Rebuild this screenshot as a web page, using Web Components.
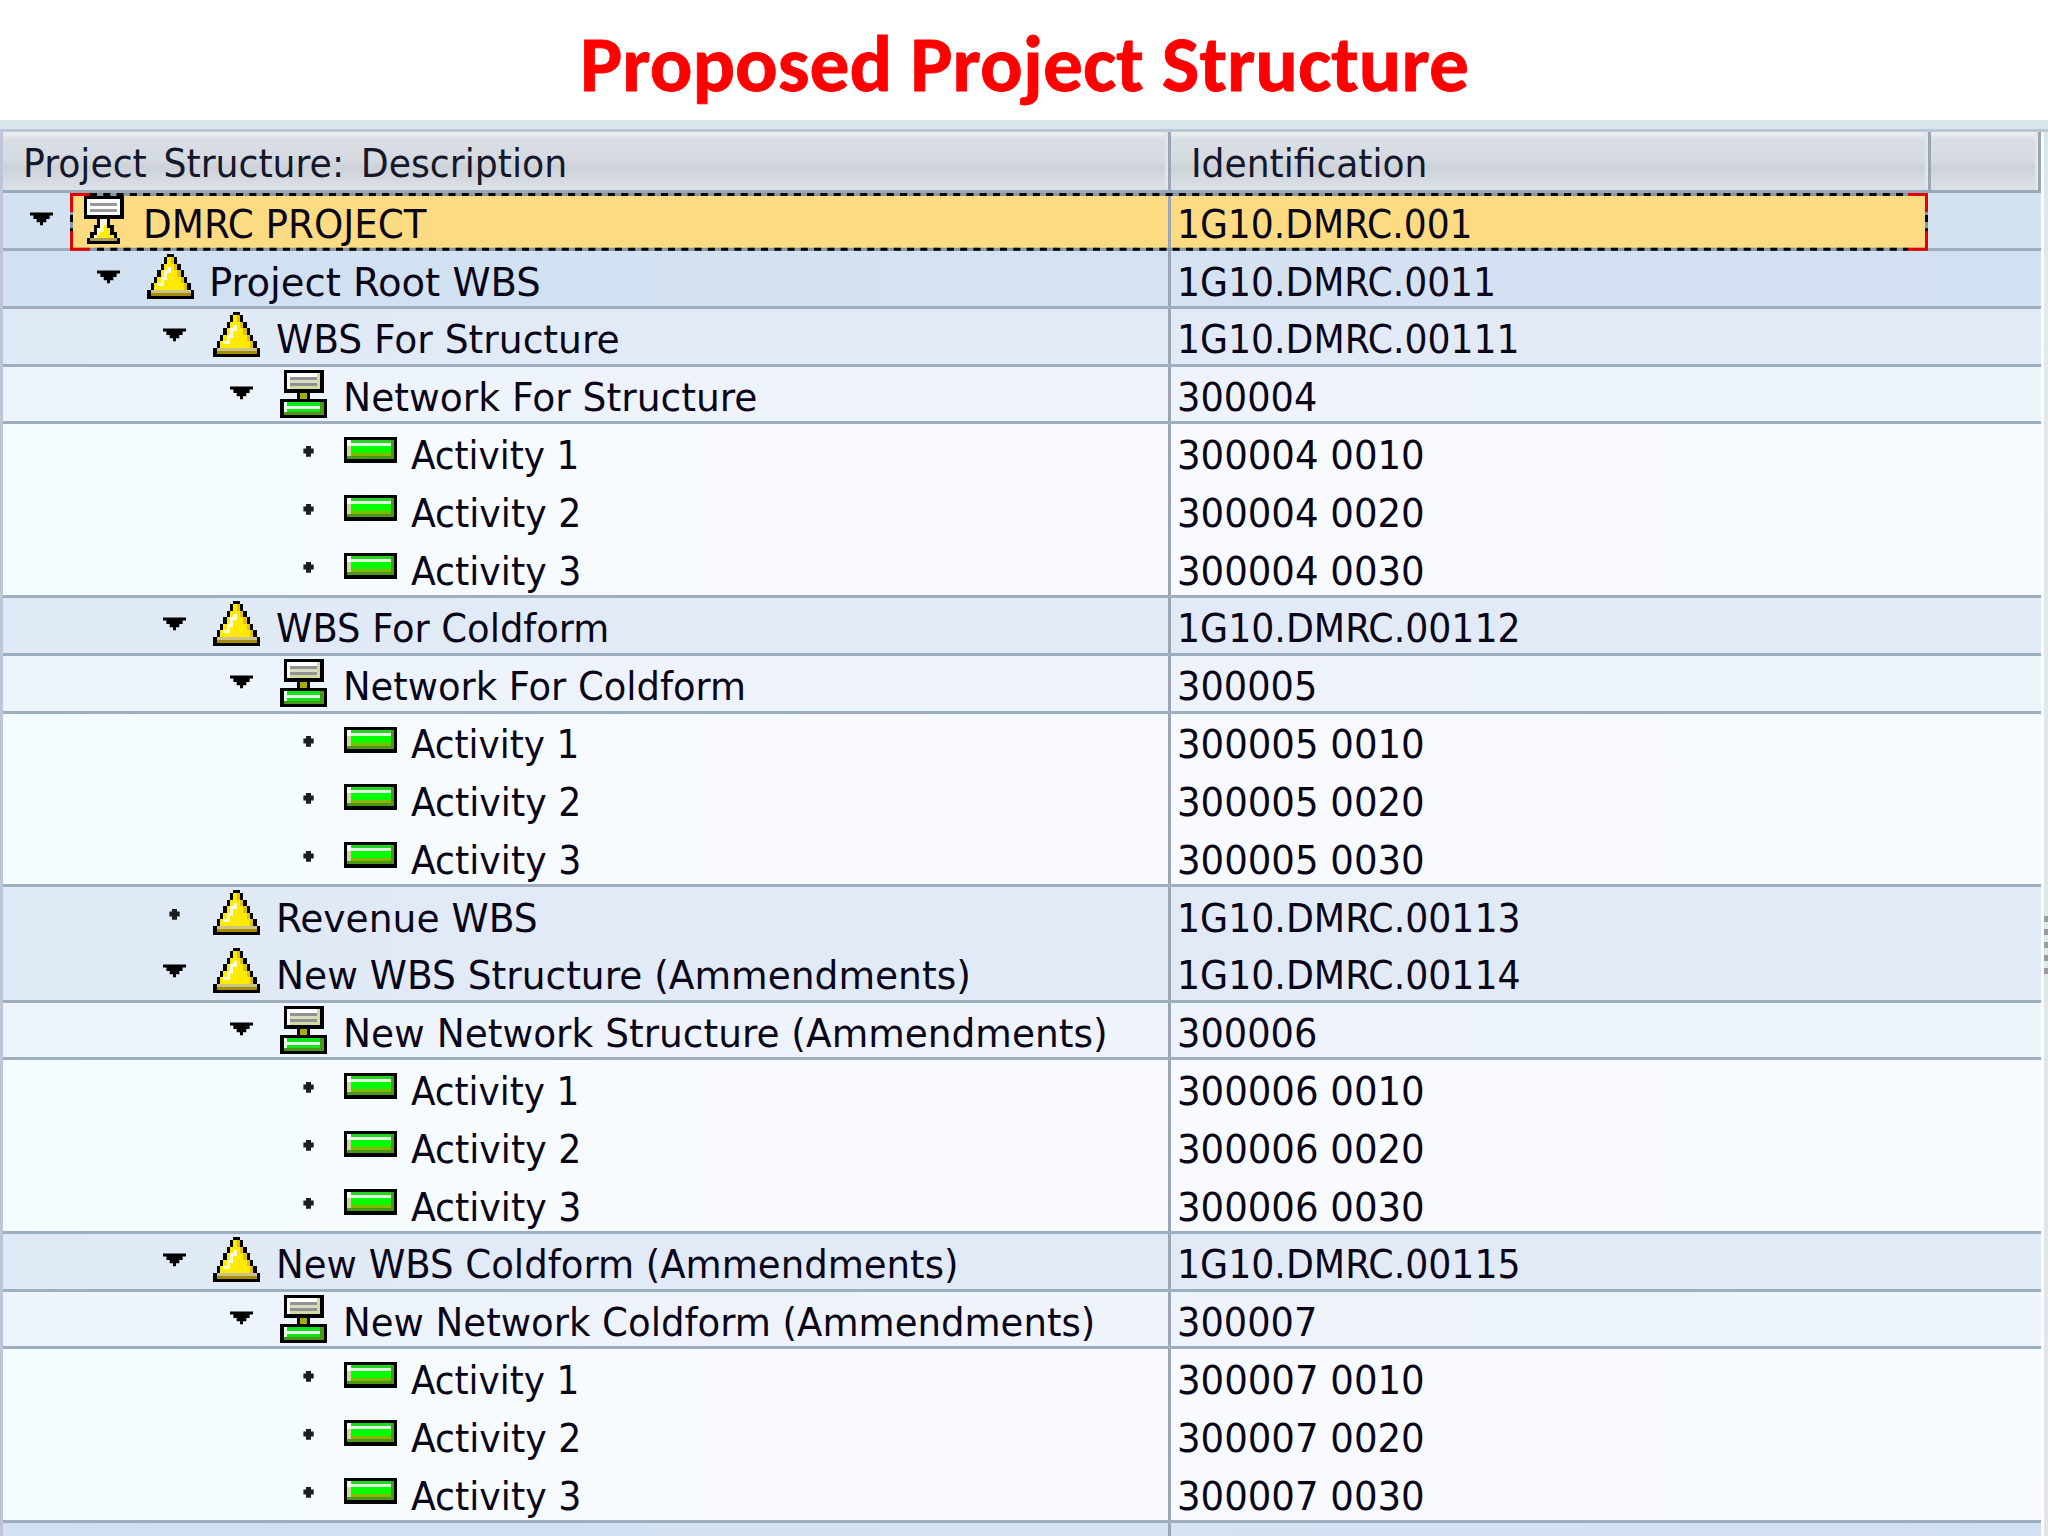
<!DOCTYPE html>
<html lang="en">
<head>
<meta charset="utf-8">
<title>Proposed Project Structure</title>
<style>
  html, body {
    margin: 0;
    height: 1536px;
    overflow: hidden;
    background: white;
  }
</style>
</head>
<body>

<project-slide>
  <fit-text slot="title" width="889">Proposed Project Structure</fit-text>
  <tree-table>
    <fit-text slot="description" width="544">Project Structure: Description</fit-text>
    <fit-text slot="identification" width="236">Identification</fit-text>

    <tree-row level="1" kind="project" code="1G10.DMRC.001" text-width="284" code-width="296" line selected>DMRC PROJECT</tree-row>
    <tree-row level="2" kind="wbs" code="1G10.DMRC.0011" text-width="332" code-width="319" line>Project Root WBS</tree-row>
    <tree-row level="3" kind="wbs" code="1G10.DMRC.00111" text-width="344" code-width="343" line>WBS For Structure</tree-row>
    <tree-row level="4" kind="network" code="300004" text-width="414" code-width="140" line>Network For Structure</tree-row>
    <tree-row level="5" kind="activity" code="300004 0010" text-width="168" code-width="248" leaf>Activity 1</tree-row>
    <tree-row level="5" kind="activity" code="300004 0020" text-width="170" code-width="248" leaf>Activity 2</tree-row>
    <tree-row level="5" kind="activity" code="300004 0030" text-width="170" code-width="248" leaf line>Activity 3</tree-row>
    <tree-row level="3" kind="wbs" code="1G10.DMRC.00112" text-width="333" code-width="344" line>WBS For Coldform</tree-row>
    <tree-row level="4" kind="network" code="300005" text-width="403" code-width="140" line>Network For Coldform</tree-row>
    <tree-row level="5" kind="activity" code="300005 0010" text-width="168" code-width="248" leaf>Activity 1</tree-row>
    <tree-row level="5" kind="activity" code="300005 0020" text-width="170" code-width="248" leaf>Activity 2</tree-row>
    <tree-row level="5" kind="activity" code="300005 0030" text-width="170" code-width="248" leaf line>Activity 3</tree-row>
    <tree-row level="3" kind="wbs" code="1G10.DMRC.00113" text-width="262" code-width="344" leaf>Revenue WBS</tree-row>
    <tree-row level="3" kind="wbs" code="1G10.DMRC.00114" text-width="695" code-width="344" line>New WBS Structure (Ammendments)</tree-row>
    <tree-row level="4" kind="network" code="300006" text-width="765" code-width="140" line>New Network Structure (Ammendments)</tree-row>
    <tree-row level="5" kind="activity" code="300006 0010" text-width="168" code-width="248" leaf>Activity 1</tree-row>
    <tree-row level="5" kind="activity" code="300006 0020" text-width="170" code-width="248" leaf>Activity 2</tree-row>
    <tree-row level="5" kind="activity" code="300006 0030" text-width="170" code-width="248" leaf line>Activity 3</tree-row>
    <tree-row level="3" kind="wbs" code="1G10.DMRC.00115" text-width="682" code-width="344" line>New WBS Coldform (Ammendments)</tree-row>
    <tree-row level="4" kind="network" code="300007" text-width="752" code-width="140" line>New Network Coldform (Ammendments)</tree-row>
    <tree-row level="5" kind="activity" code="300007 0010" text-width="168" code-width="248" leaf>Activity 1</tree-row>
    <tree-row level="5" kind="activity" code="300007 0020" text-width="170" code-width="248" leaf>Activity 2</tree-row>
    <tree-row level="5" kind="activity" code="300007 0030" text-width="170" code-width="248" leaf line>Activity 3</tree-row>
    <tree-row level="2"></tree-row>
  </tree-table>
</project-slide>

<script>
// All icons share a 16x18 pixel grid, one row high
const icons = {
  project: `
    <path d="M2 1h12v7H2z"/>
    <path fill="#fff" d="M3 2h10v5H3z"/>
    <path fill="#999" d="M4 3h8v1H4zM4 5h8v1H4z"/>
    <path d="M6 8h4v2h1v2h1v2h1v2H3v-2h1v-2h1v-2h1z"/>
    <path fill="#f8f4d8" d="M7 8h2v2H7z"/>
    <path fill="#ffec00" d="M7 10h2v1h1v2h1v1H5v-1h1v-2h1z"/>
    <path fill="#fffbd0" d="M7 10h1v2H7v1H6v1H5v-1h1v-2h1z"/>
    <path fill="#aaa05a" d="M4 14h8v1H4z"/>`,
  wbs: `
    <path d="M7 1h2v1h1v2h1v2h1v2h1v2h1v2h1v3H1v-3h1v-2h1V8h1V6h1V4h1V2h1z"/>
    <path fill="#ffea00" d="M7 2h2v2h1v2h1v2h1v2h1v2H3v-2h1V8h1V6h1V4h1z"/>
    <path fill="#e0c000" d="M8 2h1v2h1v2h1v2h1v2h1v2h-1v-2h-1V8h-1V6H9V4H8z"/>
    <path fill="#fffce0" d="M7 5h1v2H7v2H6v2H4v-1h1V8h1V6h1z"/>
    <path fill="#ccc487" d="M2 12h12v1H2z"/>
    <path fill="#a58c00" d="M2 13h12v1H2z"/>`,
  network: `
    <path d="M2 1h12v7H2zM6 8h4v2H6zM1 10h14v6H1z"/>
    <path fill="#fff" d="M3 2h10v5H3z"/>
    <path fill="#d4daa2" d="M12 2h1v5H4V6h8z"/>
    <path fill="#d8dcc0" d="M4 3h8v3H4z"/>
    <path fill="#929292" d="M4 3h8v1H4zM4 5h8v1H4z"/>
    <path fill="#a6ad00" d="M7 8h2v2H7z"/>
    <path fill="#10e51b" d="M2 11h12v4H2z"/>
    <path fill="#e5ffe8" d="M2 11h1v3H2zM3 12h10v1H3z"/>
    <path fill="#4b9819" d="M13 11h1v4H2v-1h11z"/>`,
  activity: `
    <path d="M0 4h16v8H0z"/>
    <path fill="#0f0" d="M1 5h14v6H1z"/>
    <path fill="#22d522" d="M2 5h12v1H2z"/>
    <path fill="#fff" d="M1 5h1v4H1z"/>
    <path fill="#dff8de" d="M2 6h12v1H2z"/>
    <path fill="#d1d5a0" d="M1 7h1v4H1z"/>
    <path fill="#83b900" d="M2 9h12v1H2z"/>
    <path fill="#4b9819" d="M14 5h1v6H1v-1h13z"/>`
}

// Squeezes or stretches one line of text to a set width
class FitText extends HTMLElement {
  connectedCallback() {
    const root = this.attachShadow({ mode: 'open' })
    root.innerHTML = `
      <style>
        :host {
          display: block;
          white-space: nowrap;
        }
        span {
          display: inline-block;
          transform-origin: 0 50%;
        }
      </style>
      <span><slot></slot></span>`
    const width = Number(this.getAttribute('width'))
    const span = root.querySelector('span')
    this.style.width = width + 'px'
    if (span.offsetWidth) {
      span.style.transform = `scaleX(${width / span.offsetWidth})`
    }
  }
}

class TreeIcon extends HTMLElement {
  connectedCallback() {
    this.attachShadow({ mode: 'open' }).innerHTML = `
      <style>
        :host {
          display: block;
          flex: none;
          width: 53.3px;
          height: 57.82px;
          margin-right: 12.4px;
        }
        :host([kind="activity"]) {
          margin-right: 14px;
        }
        svg {
          display: block;
          width: 100%;
          height: 100%;
          shape-rendering: crispEdges;
        }
      </style>
      <svg viewBox="0 0 16 18" preserveAspectRatio="none">${icons[this.getAttribute('kind')] || ''}</svg>`
  }
}

class TreeRow extends HTMLElement {
  connectedCallback() {
    const kind = this.getAttribute('kind')
    const level = Number(this.getAttribute('level'))
    const mark = this.hasAttribute('leaf')
      ? '<path d="M36 22h5v2.600h2.700v5H41v3.200h-5v-3.200h-2.600v-5H36z" fill="#1c1f22"/>'
      : '<path d="M27 19.500h23v3h-3.400v3.400h-3.300v3.300H40v3h-3v-3h-3.300v-3.300h-3.300v-3.400H27z"/>'

    this.attachShadow({ mode: 'open' }).innerHTML = `
      <style>
        :host {
          position: relative;
          display: grid;
          grid-template-columns: 1168px 1fr;
          flex: none;
          box-sizing: border-box;
          height: 57.82px;
          font-size: 39.4px;
          line-height: 57.82px;
          color: #0a0618;
          background: #f6fafe;
        }
        :host([level="1"]) { background: #d3e2f0; }
        :host([level="2"]) { background: linear-gradient(90deg, #d1e1f1, #d4e2f1 50%, #d2e0f3); }
        :host([level="3"]) { background: linear-gradient(90deg, #e0eaf6, #e3eaf7); }
        :host([level="4"]) { background: linear-gradient(90deg, #edf4fc, #eff3fb 50%, #edf4fc); }
        :host([level="5"]) { background: linear-gradient(90deg, #f3fcfe, #f8fafe 40%, #f7fafe); }
        :host([line])::after {
          content: '';
          position: absolute;
          left: 0;
          right: 0;
          bottom: 0;
          height: 3px;
          background: #9daec1;
        }
        .name, .code {
          display: flex;
          min-width: 0;
        }
        .name {
          box-sizing: border-box;
          border-right: 3px solid #9ba5b6;
          padding-left: ${(level - 1) * 66.7}px;
        }
        .code {
          padding-left: 6px;
        }
        fit-text {
          padding-top: 2.6px;
        }
        .mark {
          flex: none;
          width: 74px;
          height: 57.82px;
        }
        .focus {
          position: absolute;
          left: 67px;
          top: 0;
          width: 1858px;
          height: 57.82px;
        }
        :host([selected]) .code, :host([selected]) .name {
          position: relative;
          z-index: 1;
        }
        .focus.frame {
          z-index: 2;
        }
      </style>
      ${this.hasAttribute('selected') ? `
        <svg class="focus" viewBox="0 0 1858 58" preserveAspectRatio="none"><path fill="#fcdb83" d="M0 0h1858v58H0z"/></svg>
        <svg class="focus frame" viewBox="0 0 1858 58" preserveAspectRatio="none" fill="none" stroke-width="3">
          <path stroke="#8797a5" d="M1.500 1.500h1855v55h-1855z"/>
          <path stroke="#000" stroke-dasharray="7 6.280" d="M20 1.500h1818M27 56.500h1811M1.500 22v16M1856.500 22v16"/>
          <path stroke="#e00000" d="M20 1.500H1.500V19M1.500 38v18.500H20M1838 1.500h18.500V19M1856.500 38v18.500H1838"/>
        </svg>` : ''}
      <div class="name">
        ${kind ? `
          <svg class="mark" viewBox="0 0 74 57.820">${mark}</svg>
          <tree-icon kind="${kind}"></tree-icon>
          <fit-text width="${this.getAttribute('text-width')}">${this.textContent}</fit-text>` : ''}
      </div>
      <div class="code">
        ${kind ? `<fit-text width="${this.getAttribute('code-width')}">${this.getAttribute('code')}</fit-text>` : ''}
      </div>`
  }
}

class TreeTable extends HTMLElement {
  connectedCallback() {
    this.attachShadow({ mode: 'open' }).innerHTML = `
      <style>
        :host {
          display: grid;
          grid-template-columns: 2038px 3px 1fr;
          box-sizing: border-box;
          height: 1407px;
          border-top: 3px solid #bbc7d4;
          border-left: 3px solid #bfc5d8;
          font-family: "DejaVu Sans Condensed", "DejaVu Sans", sans-serif;
          font-stretch: condensed;
        }
        .main {
          display: flex;
          flex-direction: column;
          height: 1404px;
          overflow: hidden;
        }
        .head {
          display: grid;
          grid-template: 61.2px / 1168px 760px 110px;
          flex: none;
          height: 61.2px;
          font-size: 39.4px;
          line-height: 62px;
          color: #15172b;
        }
        .head div {
          box-sizing: border-box;
          border-right: 3px solid #9ba5b3;
          border-bottom: 3px solid #9ba9b6;
          padding-left: 20px;
          background: linear-gradient(#eff0f1, #dadfe5 12%, #d6dae1 48%, #cdd2d8 60%, #dce0e7);
          box-shadow: inset -3px 0 1px #e2e5e9;
          word-spacing: 5px;
        }
        .gap {
          background: #fbfefe;
        }
        .side {
          display: flex;
          flex-direction: column;
          gap: 7px;
          padding-top: 784px;
          background: linear-gradient(#d8e7ea, #e3e8ec 10%, #dfe7eb 50%, #e2e4e8);
        }
        .side i {
          height: 6px;
          background: #9a9aa6;
        }
      </style>
      <div class="main">
        <div class="head">
          <div><slot name="description"></slot></div>
          <div><slot name="identification"></slot></div>
          <div></div>
        </div>
        <slot></slot>
      </div>
      <div class="gap"></div>
      <div class="side"><i></i><i></i><i></i><i></i><i></i></div>`
  }
}

class ProjectSlide extends HTMLElement {
  connectedCallback() {
    this.attachShadow({ mode: 'open' }).innerHTML = `
      <style>
        :host {
          display: block;
          width: 2048px;
          height: 1536px;
        }
        header {
          box-sizing: border-box;
          height: 120px;
          padding: 5px 0 0 580px;
          font: bold 79px/119px Carlito, Lato, sans-serif;
          color: #f00;
          -webkit-text-stroke: .8px #f00;
        }
        main {
          padding-top: 9px;
          background: #d9e6e9;
        }
      </style>
      <header><slot name="title"></slot></header>
      <main><slot></slot></main>`
  }
}

customElements.define('project-slide', ProjectSlide)
customElements.define('tree-table', TreeTable)
customElements.define('fit-text', FitText)
customElements.define('tree-icon', TreeIcon)
customElements.define('tree-row', TreeRow)
</script>
</body>
</html>
